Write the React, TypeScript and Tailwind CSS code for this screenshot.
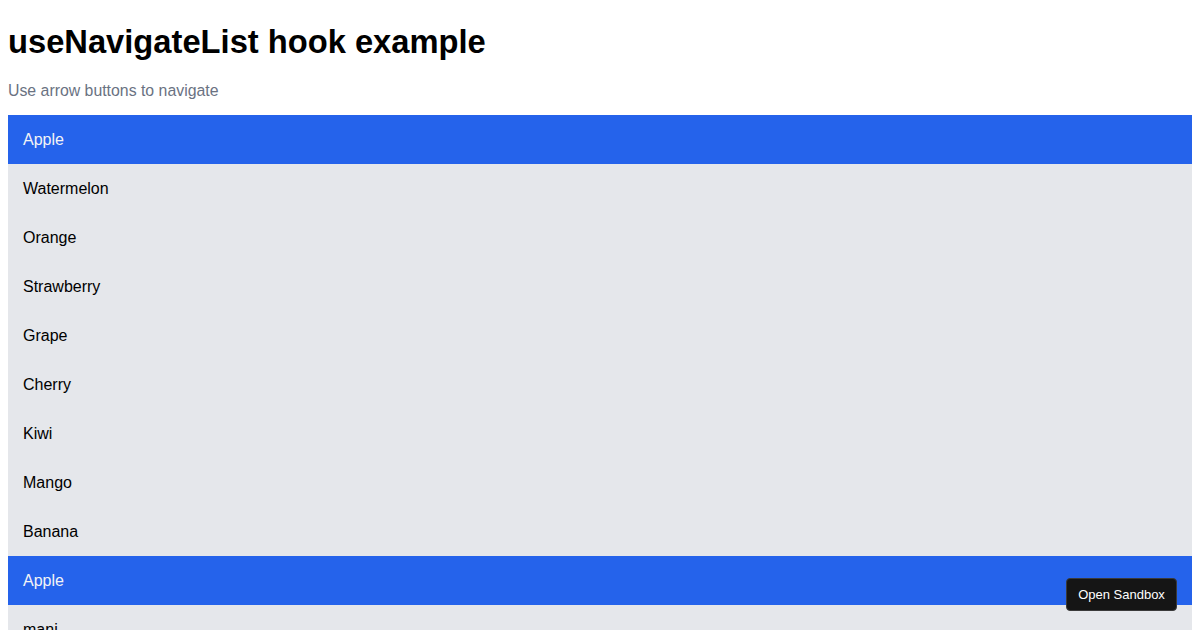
const fruits = [
  "Apple",
  "Watermelon",
  "Orange",
  "Strawberry",
  "Grape",
  "Cherry",
  "Kiwi",
  "Mango",
  "Banana",
  "Apple",
  "mani",
  "Pear",
];

export default function App() {
  return (
    <div className="relative h-[630px] overflow-hidden bg-white px-2 font-['Liberation_Sans',Arial,sans-serif]">
      <h1 className="pt-[23px] text-[32.7px] font-bold leading-[37px] text-black">
        useNavigateList hook example
      </h1>
      <p className="mt-[19px] text-[15.85px] leading-6 text-gray-500">Use arrow buttons to navigate</p>
      <ul className="mt-[12px]">
        {fruits.map((f, i) => (
          <li
            key={i}
            className={`flex h-[49px] items-center pl-[15px] text-base ${
              i === 0 || i === 9 ? "bg-[#2563eb] text-gray-100" : "bg-[#e5e7eb] text-black"
            }`}
          >
            {f}
          </li>
        ))}
      </ul>
      <button
        type="button"
        className="absolute bottom-[19px] right-[23px] h-[33px] w-[111px] rounded border border-[#3a3a3a] bg-[#151515] text-[13px] text-white"
      >
        Open Sandbox
      </button>
    </div>
  );
}
